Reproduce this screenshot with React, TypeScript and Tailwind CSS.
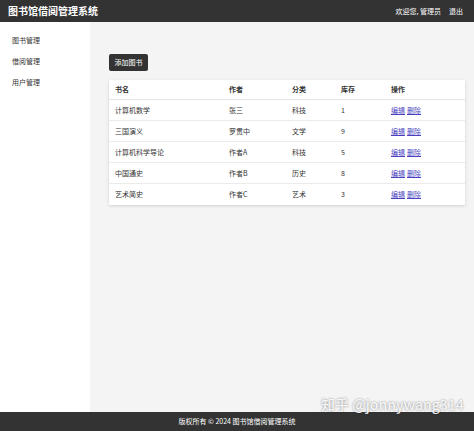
import React from "react";

const books = [
  { title: "计算机数学", author: "张三", category: "科技", stock: 1 },
  { title: "三国演义", author: "罗贯中", category: "文学", stock: 9 },
  { title: "计算机科学导论", author: "作者A", category: "科技", stock: 5 },
  { title: "中国通史", author: "作者B", category: "历史", stock: 8 },
  { title: "艺术简史", author: "作者C", category: "艺术", stock: 3 },
];

const cols = "grid grid-cols-[120px_63px_49px_50px_1fr]";

export default function App() {
  return (
    <div
      className="relative flex h-[431px] w-[474px] flex-col overflow-hidden text-[#333]"
      style={{ fontFamily: '"Noto Sans CJK SC", "Noto Sans", sans-serif' }}
    >
      {/* header */}
      <header className="flex h-[22px] shrink-0 items-center justify-between bg-[#333] pl-[8px] pr-[11px] text-white">
        <h1 className="text-[10px] font-bold leading-none">图书馆借阅管理系统</h1>
        <div className="flex gap-[8px] text-[7px] leading-none">
          <span>欢迎您, 管理员</span>
          <span>退出</span>
        </div>
      </header>

      <div className="flex flex-1">
        {/* sidebar */}
        <aside className="flex w-[90px] shrink-0 flex-col gap-[12px] bg-white pl-[12px] pt-[14px] text-[7px] leading-[9px]">
          <a>图书管理</a>
          <a>借阅管理</a>
          <a>用户管理</a>
        </aside>

        {/* main */}
        <main className="flex flex-1 flex-col items-start bg-[#f4f4f4] pl-[19px] pr-[9px] pt-[32px]">
          <button className="block h-[17px] w-[39px] rounded-[2px] bg-[#333] text-[7px] leading-none text-white">
            添加图书
          </button>

          <div className="mt-[9px] w-full bg-white text-[7px] shadow-[0_1px_3px_rgba(0,0,0,0.15)]">
            <div className={`${cols} h-[20px] items-center border-b border-[#e6e6e6] font-bold`}>
              <div className="pl-[6px]">书名</div>
              <div>作者</div>
              <div>分类</div>
              <div>库存</div>
              <div>操作</div>
            </div>
            {books.map((b, i) => (
              <div
                key={b.title}
                className={`${cols} h-[21px] items-center ${i < books.length - 1 ? "border-b border-[#ebebeb]" : ""}`}
              >
                <div className="pl-[6px]">{b.title}</div>
                <div>{b.author}</div>
                <div>{b.category}</div>
                <div>{b.stock}</div>
                <div className="flex gap-[2px] text-[#4a3fc0]">
                  <a className="underline">编辑</a>
                  <a className="underline">删除</a>
                </div>
              </div>
            ))}
          </div>
        </main>
      </div>

      {/* footer */}
      <footer className="flex h-[19px] shrink-0 items-center justify-center bg-[#333] text-[7px] text-white">
        版权所有 © 2024 图书馆借阅管理系统
      </footer>

      {/* watermark */}
      <div className="pointer-events-none absolute left-[321px] top-[397px] text-[14px] font-medium leading-none text-white/90 [text-shadow:0_0_2px_rgba(0,0,0,0.5)]">
        知乎 @jonnywang314
      </div>
    </div>
  );
}
